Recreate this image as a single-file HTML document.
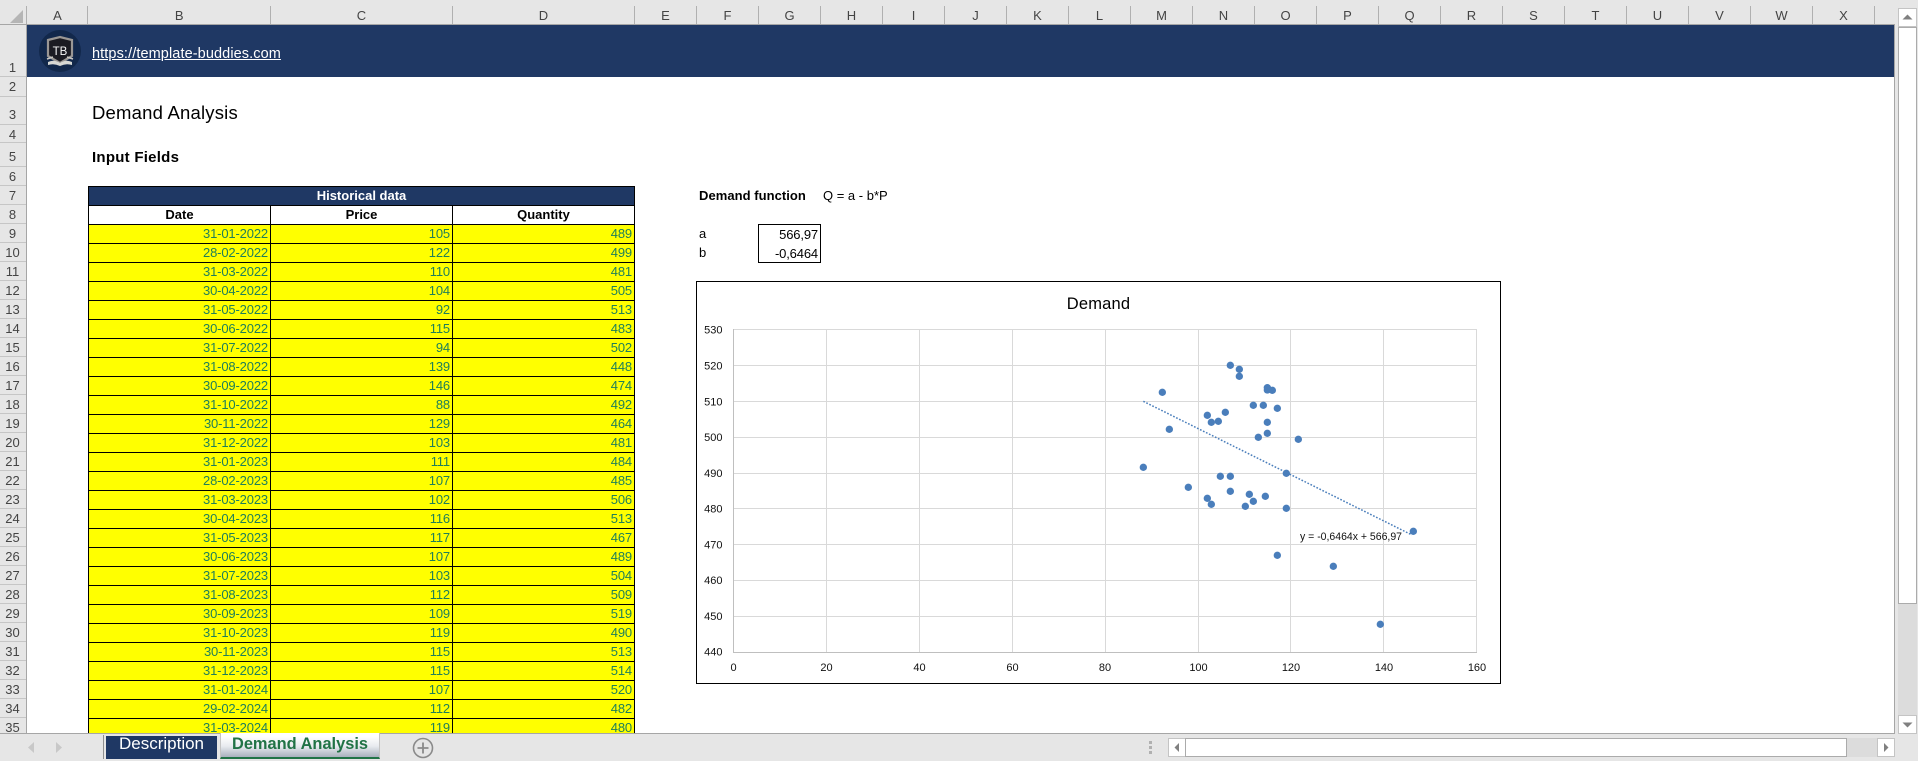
<!DOCTYPE html>
<html><head><meta charset="utf-8"><title>Demand Analysis</title>
<style>
html,body{margin:0;padding:0;width:1918px;height:761px;overflow:hidden;background:#e6e6e6;font-family:"Liberation Sans",sans-serif;color:#000}
div,span,table,td,th{box-sizing:border-box}
.abs{position:absolute;white-space:nowrap}
#sheet{position:absolute;left:0;top:0;width:1895px;height:733px;overflow:hidden;background:#fff}
#cols{position:absolute;left:0;top:0;height:25px;width:1895px;display:flex;background:#e6e6e6;border-bottom:1px solid #a6a6a6}
#cols div{height:25px;padding-top:6px;line-height:19px;text-align:center;font-size:13px;color:#444;position:relative}
#cols div:after{content:"";position:absolute;right:0;top:6px;bottom:1px;width:1px;background:#b0b0b0}
#rows{position:absolute;left:0;top:25px;width:27px;height:708px;background:#e6e6e6;border-right:1px solid #a6a6a6}
#rows div{height:19px;line-height:20px;font-size:13px;color:#444;text-align:center;border-bottom:1px solid #c6c6c6;padding-right:1px}
#band{position:absolute;left:27px;top:25px;width:1867px;height:52px;background:#1f3864}
#t{position:absolute;left:88px;top:186px;border-collapse:separate;border-spacing:0;table-layout:fixed;width:547px;border-left:1px solid #000;border-top:1px solid #000;font-size:13px;letter-spacing:-.15px}
#t td{width:182px;height:19px;padding:0 2px 0 0;line-height:18px;border-right:1px solid #000;border-bottom:1px solid #000;background:#ff0;color:#1f7f5a;text-align:right;white-space:nowrap}
#t th{height:19px;padding:0;line-height:18px;border-right:1px solid #000;border-bottom:1px solid #000;font-size:13px;background:#fff;letter-spacing:0}
#t th.h{background:#1f3864;color:#fff}
</style></head><body>
<div id="sheet">
<div id="band"></div>
<div id="cols">
<div style="width:27px"></div><div style="width:61px">A</div><div style="width:182.5px">B</div><div style="width:182px">C</div><div style="width:182px">D</div>
<div style="width:62px">E</div><div style="width:62px">F</div><div style="width:62px">G</div><div style="width:62px">H</div><div style="width:62px">I</div><div style="width:62px">J</div><div style="width:62px">K</div><div style="width:62px">L</div><div style="width:62px">M</div><div style="width:62px">N</div><div style="width:62px">O</div><div style="width:62px">P</div><div style="width:62px">Q</div><div style="width:62px">R</div><div style="width:62px">S</div><div style="width:62px">T</div><div style="width:62px">U</div><div style="width:62px">V</div><div style="width:62px">W</div><div style="width:62px">X</div>
</div>
<svg class="abs" style="left:0;top:0" width="27" height="25"><path d="M10 23L23 10V23Z" fill="#b5b5b5"/></svg>
<div id="rows">
<div style="height:52px;line-height:86px">1</div><div style="height:19.5px">2</div><div style="height:28px;line-height:35px">3</div><div style="height:18.5px">4</div><div style="height:24px;line-height:28px">5</div><div>6</div><div>7</div><div>8</div><div>9</div><div>10</div><div>11</div><div>12</div><div>13</div><div>14</div><div>15</div><div>16</div><div>17</div><div>18</div><div>19</div><div>20</div><div>21</div><div>22</div><div>23</div><div>24</div><div>25</div><div>26</div><div>27</div><div>28</div><div>29</div><div>30</div><div>31</div><div>32</div><div>33</div><div>34</div><div>35</div>
</div>

<svg class="abs" style="left:37px;top:28px" width="46" height="46" viewBox="0 0 46 46">
<circle cx="23" cy="23" r="21" fill="#12284b"/>
<path d="M11 12L23 9L35 12L35 28L23 35L11 28Z" fill="#1b1b22" stroke="#9a9794" stroke-width="2.2"/>
<path d="M11 34Q17 31 23 35Q29 31 35 34L35 37Q29 35 23 38Q17 35 11 37Z" fill="#d8d8d4"/>
<path d="M10 31L16 29M36 31L30 29" stroke="#c9c7c2" stroke-width="1.5"/>
<text x="23" y="27" font-family="Liberation Sans" font-size="11.5" fill="#f6f6f6" text-anchor="middle">TB</text>
</svg>
<div class="abs" style="left:92px;top:45px;font-size:14.5px;line-height:18px;color:#fff;text-decoration:underline;letter-spacing:.1px">https://template-buddies.com</div>
<div class="abs" style="left:92px;top:102px;font-size:18.5px;line-height:22px;letter-spacing:.2px">Demand Analysis</div>
<div class="abs" style="left:92px;top:149px;font-size:15px;line-height:18px;font-weight:bold;letter-spacing:.25px">Input Fields</div>

<table id="t"><tbody>
<tr><th class="h" colspan="3">Historical data</th></tr>
<tr><th style="width:182px">Date</th><th style="width:182px">Price</th><th style="width:182px">Quantity</th></tr>
<tr><td>31-01-2022</td><td>105</td><td>489</td></tr>
<tr><td>28-02-2022</td><td>122</td><td>499</td></tr>
<tr><td>31-03-2022</td><td>110</td><td>481</td></tr>
<tr><td>30-04-2022</td><td>104</td><td>505</td></tr>
<tr><td>31-05-2022</td><td>92</td><td>513</td></tr>
<tr><td>30-06-2022</td><td>115</td><td>483</td></tr>
<tr><td>31-07-2022</td><td>94</td><td>502</td></tr>
<tr><td>31-08-2022</td><td>139</td><td>448</td></tr>
<tr><td>30-09-2022</td><td>146</td><td>474</td></tr>
<tr><td>31-10-2022</td><td>88</td><td>492</td></tr>
<tr><td>30-11-2022</td><td>129</td><td>464</td></tr>
<tr><td>31-12-2022</td><td>103</td><td>481</td></tr>
<tr><td>31-01-2023</td><td>111</td><td>484</td></tr>
<tr><td>28-02-2023</td><td>107</td><td>485</td></tr>
<tr><td>31-03-2023</td><td>102</td><td>506</td></tr>
<tr><td>30-04-2023</td><td>116</td><td>513</td></tr>
<tr><td>31-05-2023</td><td>117</td><td>467</td></tr>
<tr><td>30-06-2023</td><td>107</td><td>489</td></tr>
<tr><td>31-07-2023</td><td>103</td><td>504</td></tr>
<tr><td>31-08-2023</td><td>112</td><td>509</td></tr>
<tr><td>30-09-2023</td><td>109</td><td>519</td></tr>
<tr><td>31-10-2023</td><td>119</td><td>490</td></tr>
<tr><td>30-11-2023</td><td>115</td><td>513</td></tr>
<tr><td>31-12-2023</td><td>115</td><td>514</td></tr>
<tr><td>31-01-2024</td><td>107</td><td>520</td></tr>
<tr><td>29-02-2024</td><td>112</td><td>482</td></tr>
<tr><td>31-03-2024</td><td>119</td><td>480</td></tr>
</tbody></table>

<div class="abs" style="left:699px;top:187px;font-size:13px;line-height:18px;font-weight:bold;letter-spacing:.05px">Demand function</div>
<div class="abs" style="left:823px;top:187px;font-size:13px;line-height:18px">Q = a - b*P</div>
<div class="abs" style="left:699px;top:225px;font-size:13px;line-height:18px">a</div>
<div class="abs" style="left:699px;top:244px;font-size:13px;line-height:18px">b</div>
<div class="abs" style="left:758px;top:224px;width:63px;height:39px;border:1px solid #000;font-size:13px;line-height:19px;text-align:right;padding-right:2px;letter-spacing:-.15px">566,97<br>-0,6464</div>

<svg class="abs" style="left:0;top:0" width="1895" height="733" viewBox="0 0 1895 733" font-family="Liberation Sans">
<rect x="696.5" y="281.5" width="804" height="402" fill="#fff" stroke="#000" stroke-width="1"/>
<path d="M826.5 329.5V652M919.5 329.5V652M1012.5 329.5V652M1105.5 329.5V652M1198.5 329.5V652M1290.5 329.5V652M1383.5 329.5V652M1476.5 329.5V652M733 329.5H1477M733 365.5H1477M733 401.5H1477M733 437.5H1477M733 473.5H1477M733 508.5H1477M733 544.5H1477M733 580.5H1477M733 616.5H1477" stroke="#d9d9d9" stroke-width="1" fill="none"/>
<path d="M733.5 329V652.5H1477" stroke="#bfbfbf" stroke-width="1" fill="none"/>
<text x="1098.5" y="309" font-size="16.5" text-anchor="middle" letter-spacing=".2">Demand</text>
<g font-size="11" text-anchor="end" fill="#111">
<text x="722.5" y="333.5">530</text><text x="722.5" y="369.5">520</text><text x="722.5" y="405.5">510</text><text x="722.5" y="441">500</text><text x="722.5" y="477">490</text><text x="722.5" y="512.5">480</text><text x="722.5" y="548.5">470</text><text x="722.5" y="584">460</text><text x="722.5" y="620">450</text><text x="722.5" y="655.5">440</text>
</g>
<g font-size="11" text-anchor="middle" fill="#111">
<text x="733.5" y="671">0</text><text x="826.5" y="671">20</text><text x="919.5" y="671">40</text><text x="1012.5" y="671">60</text><text x="1105" y="671">80</text><text x="1198.5" y="671">100</text><text x="1291" y="671">120</text><text x="1384" y="671">140</text><text x="1477" y="671">160</text>
</g>
<g transform="translate(1090 270) scale(.33333)">
<path d="M160 394L966 795" stroke="#4a7ebb" stroke-width="4.5" stroke-dasharray="5 5" fill="none"/>
<g fill="#4a7ebb">
<circle cx="421" cy="286" r="11"/><circle cx="448" cy="298" r="11"/><circle cx="448" cy="319" r="11"/><circle cx="532" cy="353" r="11"/><circle cx="532" cy="360" r="11"/><circle cx="547" cy="361" r="11"/><circle cx="217" cy="367" r="11"/><circle cx="490" cy="406" r="11"/><circle cx="520" cy="406" r="11"/><circle cx="562" cy="415" r="11"/><circle cx="406" cy="427" r="11"/><circle cx="352" cy="436" r="11"/><circle cx="364" cy="457" r="11"/><circle cx="385" cy="454" r="11"/><circle cx="532" cy="457" r="11"/><circle cx="238" cy="478" r="11"/><circle cx="532" cy="490" r="11"/><circle cx="505" cy="502" r="11"/><circle cx="625" cy="508" r="11"/><circle cx="160" cy="592" r="11"/><circle cx="589" cy="610" r="11"/><circle cx="391" cy="619" r="11"/><circle cx="421" cy="619" r="11"/><circle cx="295" cy="652" r="11"/><circle cx="421" cy="664" r="11"/><circle cx="478" cy="673" r="11"/><circle cx="526" cy="679" r="11"/><circle cx="352" cy="685" r="11"/><circle cx="364" cy="703" r="11"/><circle cx="490" cy="694" r="11"/><circle cx="466" cy="709" r="11"/><circle cx="589" cy="715" r="11"/><circle cx="970" cy="784" r="11"/><circle cx="562" cy="856" r="11"/><circle cx="730" cy="889" r="11"/><circle cx="871" cy="1063" r="11"/>
</g></g>
<text x="1300" y="540" font-size="11" textLength="102" lengthAdjust="spacingAndGlyphs" fill="#111">y = -0,6464x + 566,97</text>
</svg>
</div>

<!-- frame lines -->
<div class="abs" style="left:1894px;top:25px;width:1px;height:708px;background:#a6a6a6"></div>
<div class="abs" style="left:0;top:733px;width:1895px;height:1px;background:#a6a6a6"></div>

<!-- vertical scrollbar -->
<div class="abs" style="left:1898px;top:27px;width:19px;height:706px;background:#dcdcdc"></div>
<div class="abs" style="left:1898px;top:8px;width:19px;height:19px;background:#fff;border:1px solid #c4c4c4"></div>
<svg class="abs" style="left:1898px;top:8px" width="19" height="19"><path d="M4.5 11.5L9.5 6.5L14.5 11.5Z" fill="#808080"/></svg>
<div class="abs" style="left:1898px;top:27px;width:19px;height:577px;background:#fff;border:1px solid #ababab"></div>
<div class="abs" style="left:1898px;top:715px;width:19px;height:19px;background:#fff;border:1px solid #c4c4c4"></div>
<svg class="abs" style="left:1898px;top:715px" width="19" height="19"><path d="M4.5 7.5L9.5 12.5L14.5 7.5Z" fill="#808080"/></svg>

<!-- sheet tabs -->
<svg class="abs" style="left:0;top:734px" width="110" height="27"><path d="M34 8V19L28 13.5Z" fill="#c8c8c8"/><path d="M56 8V19L62 13.5Z" fill="#c8c8c8"/><rect x="103" y="1" width="1" height="24" fill="#8f8f8f"/></svg>
<div class="abs" style="left:106px;top:736px;width:111px;height:23px;background:#1f3864;color:#fff;font-size:17px;line-height:16px;text-align:center">Description</div>
<div class="abs" style="left:220px;top:733px;width:160px;height:26px;background:linear-gradient(#fff 15%,#e8ebef 55%,#a9b0bd 100%);border-left:1px solid #c4c4c4;border-right:1px solid #c4c4c4;border-bottom:2px solid #217346;color:#217346;font-size:16.4px;font-weight:bold;line-height:23px;text-align:center">Demand Analysis</div>
<svg class="abs" style="left:412px;top:737px" width="22" height="22"><circle cx="11" cy="11" r="9.5" fill="none" stroke="#8a8a8a" stroke-width="1.6"/><path d="M11 5.5V16.5M5.5 11H16.5" stroke="#8a8a8a" stroke-width="1.8"/></svg>

<!-- horizontal scrollbar -->
<svg class="abs" style="left:1147px;top:740px" width="8" height="15"><rect x="2" y="1" width="3" height="3" fill="#b0b0b0"/><rect x="2" y="6" width="3" height="3" fill="#b0b0b0"/><rect x="2" y="11" width="3" height="3" fill="#b0b0b0"/></svg>
<div class="abs" style="left:1168px;top:738px;width:726px;height:19px;background:#dcdcdc"></div>
<div class="abs" style="left:1168px;top:738px;width:18px;height:19px;background:#fff;border:1px solid #c4c4c4"></div>
<svg class="abs" style="left:1168px;top:738px" width="18" height="19"><path d="M11 5V14L6.5 9.5Z" fill="#808080"/></svg>
<div class="abs" style="left:1185px;top:738px;width:662px;height:19px;background:#fff;border:1px solid #ababab"></div>
<div class="abs" style="left:1877px;top:738px;width:18px;height:19px;background:#fff;border:1px solid #c4c4c4"></div>
<svg class="abs" style="left:1877px;top:738px" width="18" height="19"><path d="M7 5V14L11.5 9.5Z" fill="#808080"/></svg>
</body></html>
